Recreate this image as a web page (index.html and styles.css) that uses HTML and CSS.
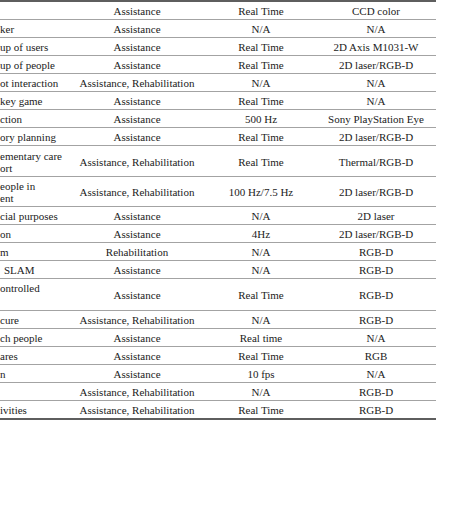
FILE: index.html
```html
<!DOCTYPE html>
<html>
<head>
<meta charset="utf-8">
<link rel="stylesheet" href="styles.css">
</head>
<body>
<table class="data">
  <colgroup>
    <col class="c1"><col class="c2"><col class="c3"><col class="c4">
  </colgroup>
  <tbody>
    <tr><td class="name"></td><td>Assistance</td><td>Real Time</td><td>CCD color</td></tr>
    <tr><td class="name">ker</td><td>Assistance</td><td>N/A</td><td>N/A</td></tr>
    <tr><td class="name">up of users</td><td>Assistance</td><td>Real Time</td><td>2D Axis M1031-W</td></tr>
    <tr><td class="name">up of people</td><td>Assistance</td><td>Real Time</td><td>2D laser/RGB-D</td></tr>
    <tr><td class="name">ot interaction</td><td>Assistance, Rehabilitation</td><td>N/A</td><td>N/A</td></tr>
    <tr><td class="name">key game</td><td>Assistance</td><td>Real Time</td><td>N/A</td></tr>
    <tr><td class="name">ction</td><td>Assistance</td><td>500 Hz</td><td>Sony PlayStation Eye</td></tr>
    <tr><td class="name">ory planning</td><td>Assistance</td><td>Real Time</td><td>2D laser/RGB-D</td></tr>
    <tr class="tall"><td class="name">ementary care<br>ort</td><td>Assistance, Rehabilitation</td><td>Real Time</td><td>Thermal/RGB-D</td></tr>
    <tr class="tall2"><td class="name">eople in<br>ent</td><td>Assistance, Rehabilitation</td><td>100 Hz/7.5 Hz</td><td>2D laser/RGB-D</td></tr>
    <tr><td class="name">cial purposes</td><td>Assistance</td><td>N/A</td><td>2D laser</td></tr>
    <tr><td class="name">on</td><td>Assistance</td><td>4Hz</td><td>2D laser/RGB-D</td></tr>
    <tr><td class="name">m</td><td>Rehabilitation</td><td>N/A</td><td>RGB-D</td></tr>
    <tr><td class="name indent">SLAM</td><td>Assistance</td><td>N/A</td><td>RGB-D</td></tr>
    <tr class="tall3"><td class="name">ontrolled<br>&nbsp;</td><td>Assistance</td><td>Real Time</td><td>RGB-D</td></tr>
    <tr><td class="name">cure</td><td>Assistance, Rehabilitation</td><td>N/A</td><td>RGB-D</td></tr>
    <tr><td class="name">ch people</td><td>Assistance</td><td>Real time</td><td>N/A</td></tr>
    <tr><td class="name">ares</td><td>Assistance</td><td>Real Time</td><td>RGB</td></tr>
    <tr><td class="name">n</td><td>Assistance</td><td>10 fps</td><td>N/A</td></tr>
    <tr><td class="name"></td><td>Assistance, Rehabilitation</td><td>N/A</td><td>RGB-D</td></tr>
    <tr><td class="name">ivities</td><td>Assistance, Rehabilitation</td><td>Real Time</td><td>RGB-D</td></tr>
  </tbody>
</table>
</body>
</html>
```
FILE: styles.css
```css
html, body {
  margin: 0;
  padding: 0;
  background: #ffffff;
}
body {
  width: 474px;
  height: 513px;
  overflow: hidden;
  font-family: "Liberation Serif", "Times New Roman", serif;
  font-size: 11px;
  color: #222222;
}
.data {
  width: 436px;
  table-layout: fixed;
  border-collapse: collapse;
  border-top: 2px solid #5e5e5e;
  border-bottom: 2px solid #5e5e5e;
}
.c1 { width: 68px; }
.c2 { width: 138px; }
.c3 { width: 110px; }
.c4 { width: 120px; }
.data td {
  padding: 3px 0 2px;
  line-height: 12px;
  text-align: center;
  vertical-align: middle;
  white-space: nowrap;
  border-bottom: 1px solid #a3a3a3;
}
.data td.name {
  text-align: left;
  overflow: hidden;
}
.data td.indent {
  padding-left: 4px;
}
.tall td { height: 25px; }
.tall2 td { height: 24px; }
.tall3 td.name { line-height: 13px; }
.tall3 td { height: 26px; }
.data tr:last-child td {
  border-bottom: none;
}
```
